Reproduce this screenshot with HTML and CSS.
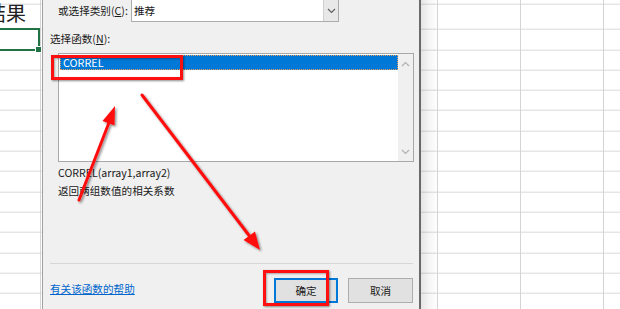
FILE: index.html
```html
<!DOCTYPE html>
<html lang="zh-CN">
<head>
<meta charset="utf-8">
<link rel="stylesheet" href="styles.css">
</head>
<body>
<div class="page">
  <div class="sheet-left">
    <div class="title-cell">结果</div>
    <div class="sel-cell"><span class="handle"></span></div>
  </div>
  <div class="dialog">
    <div class="row-cat">
      <span class="label">或选择类别(<u>C</u>):</span>
      <div class="combo">
        <span class="combo-text">推荐</span>
        <span class="combo-btn">
          <svg width="9" height="6" viewBox="0 0 9 6"><polyline points="1,1 4.5,4.5 8,1" fill="none" stroke="#606060" stroke-width="1.2"/></svg>
        </span>
      </div>
    </div>
    <div class="label fn-label">选择函数(<u>N</u>):</div>
    <div class="listbox">
      <div class="list-items">
        <div class="item selected">CORREL</div>
      </div>
      <div class="scrollbar">
        <svg width="9" height="6" viewBox="0 0 9 6"><polyline points="1,5 4.5,1.5 8,5" fill="none" stroke="#b0b0b0" stroke-width="1.2"/></svg>
        <svg width="9" height="6" viewBox="0 0 9 6"><polyline points="1,1 4.5,4.5 8,1" fill="none" stroke="#b0b0b0" stroke-width="1.2"/></svg>
      </div>
    </div>
    <div class="desc">CORREL(array1,array2)</div>
    <div class="desc">返回两组数值的相关系数</div>
    <div class="separator"></div>
    <div class="bottom-row">
      <a class="help-link">有关该函数的帮助</a>
      <div class="buttons">
        <button class="btn btn-ok">确定</button>
        <button class="btn">取消</button>
      </div>
    </div>
  </div>
  <div class="sheet-right"></div>

  <div class="mark mark-list"></div>
  <div class="mark mark-ok"></div>
  <svg class="arrows" width="620" height="309" viewBox="0 0 620 309">
    <defs>
      <filter id="sh" x="-20%" y="-20%" width="140%" height="140%">
        <feDropShadow dx="1.5" dy="1.5" stdDeviation="1.2" flood-color="#000" flood-opacity="0.45"/>
      </filter>
    </defs>
    <g filter="url(#sh)" fill="#ff1010" stroke="#ff1010">
      <line x1="79" y1="200" x2="110" y2="120" stroke-width="3" stroke-linecap="round"/>
      <polygon points="115,106 114.5,125.5 102.5,121" stroke="none"/>
      <line x1="142" y1="95" x2="251" y2="238" stroke-width="3" stroke-linecap="round"/>
      <polygon points="260,250 243.5,240 255,231.5" stroke="none"/>
    </g>
  </svg>
</div>
</body>
</html>
```

FILE: styles.css
```css
html, body {
  margin: 0;
  padding: 0;
}
body {
  width: 620px;
  height: 309px;
  overflow: hidden;
  background: #ffffff;
  font-family: "Noto Sans CJK SC", "Noto Sans", sans-serif;
}
.page {
  position: relative;
  display: flex;
  width: 620px;
  height: 309px;
  overflow: hidden;
}

/* left part of the spreadsheet */
.sheet-left {
  width: 42px;
  flex: none;
  background:
    linear-gradient(to right, transparent 40px, #d4d4d4 40px, #d4d4d4 41px, transparent 41px),
    repeating-linear-gradient(to bottom, transparent 0, transparent 19.3px, #d9d9d9 19.3px, #d9d9d9 20.3px);
  background-position: 0 0, 0 9.7px;
  background-color: #fff;
}
.title-cell {
  height: 28px;
  margin-left: -14px;
  font-family: "Noto Sans CJK SC", serif;
  font-size: 20px;
  line-height: 26px;
  color: #222;
  white-space: nowrap;
}
.sel-cell {
  position: relative;
  margin-left: -4px;
  width: 40px;
  height: 19px;
  border: 2px solid #217346;
}
.handle {
  position: absolute;
  right: -4px;
  bottom: -4px;
  width: 5px;
  height: 5px;
  background: #217346;
  border: 1px solid #fff;
}

/* dialog */
.dialog {
  width: 363px;
  flex: none;
  background: #f0f0f0;
  border-left: 1px solid #a0a0a0;
  border-right: 2px solid #6a6a6a;
  padding: 0 6px 0 7px;
  box-sizing: content-box;
  font-size: 10.6px;
  color: #1a1a1a;
}
.dialog u {
  text-decoration: underline;
  text-underline-offset: 1px;
}
.row-cat {
  display: flex;
  align-items: center;
  margin-top: -1px;
  height: 23px;
}
.label {
  line-height: 16px;
  white-space: nowrap;
}
.row-cat .label {
  margin-left: 8px;
  width: 73px;
  margin-top: 1px;
}
.combo {
  display: flex;
  width: 206px;
  height: 21px;
  border: 1px solid #acacac;
  background: #fff;
  box-sizing: content-box;
}
.combo-text {
  flex: 1;
  padding-left: 2px;
  line-height: 22px;
}
.combo-btn {
  width: 14px;
  display: flex;
  align-items: center;
  justify-content: center;
  background: #e8e8e8;
  border-left: 1px solid #d0d0d0;
}
.fn-label {
  margin-top: 9px;
  height: 16px;
}
.listbox {
  margin-top: 6px;
  margin-left: 8px;
  width: 354px;
  height: 107px;
  display: flex;
  border: 1px solid #a8a8a8;
  background: #fff;
}
.list-items {
  flex: 1;
  padding: 1px 0 0 1px;
}
.item {
  height: 15px;
  line-height: 15px;
  padding-left: 3px;
  font-size: 10.8px;
}
.item.selected {
  background: #0078d7;
  color: #fff;
  outline: 1px dotted #e8a060;
  outline-offset: -1px;
}
.scrollbar {
  width: 15px;
  background: #f0f0f0;
  display: flex;
  flex-direction: column;
  justify-content: space-between;
  align-items: center;
  padding: 7px 0 6px;
  box-sizing: border-box;
}
.desc {
  margin-left: 8px;
  line-height: 18px;
  height: 18px;
  white-space: nowrap;
}
.listbox + .desc {
  margin-top: 2px;
}
.separator {
  margin-top: 63px;
  height: 1px;
  background: #d7d7d7;
}
.bottom-row {
  margin-top: 14px;
  display: flex;
  justify-content: space-between;
  align-items: flex-start;
}
.help-link {
  color: #0066cc;
  text-decoration: underline;
  text-underline-offset: 1px;
  line-height: 16px;
  margin-top: 3px;
  cursor: pointer;
}
.buttons {
  display: flex;
  gap: 10px;
}
.btn {
  width: 65px;
  height: 25px;
  margin: 0;
  padding: 0;
  font-family: inherit;
  font-size: 10.6px;
  color: #1a1a1a;
  background: #e1e1e1;
  border: 1px solid #adadad;
  box-sizing: border-box;
}
.btn-ok {
  width: 64px;
  border: 2px solid #0078d7;
}

/* right part of the spreadsheet */
.sheet-right {
  flex: 1;
  background:
    linear-gradient(to right, rgba(0,0,0,0.10) 0, rgba(0,0,0,0.04) 8px, rgba(0,0,0,0.01) 15px, transparent 16px),
    linear-gradient(to right, transparent 16px, #d4d4d4 16px, #d4d4d4 17px, transparent 17px),
    repeating-linear-gradient(to right, transparent 0, transparent 82px, #d4d4d4 82px, #d4d4d4 83px),
    repeating-linear-gradient(to bottom, transparent 0, transparent 19.3px, #d9d9d9 19.3px, #d9d9d9 20.3px);
  background-position: 0 0, 0 0, 17px 0, 0 9.7px;
  background-color: #fff;
}

/* annotations */
.mark {
  position: absolute;
  border: 3px solid #ff1010;
  box-shadow: 1px 1px 2px rgba(0,0,0,0.45), inset 1px 1px 2px rgba(0,0,0,0.3);
}
.mark-list {
  left: 51px;
  top: 55px;
  width: 126px;
  height: 19px;
}
.mark-ok {
  left: 263px;
  top: 270px;
  width: 60px;
  height: 30px;
}
.arrows {
  position: absolute;
  left: 0;
  top: 0;
  pointer-events: none;
}
```
